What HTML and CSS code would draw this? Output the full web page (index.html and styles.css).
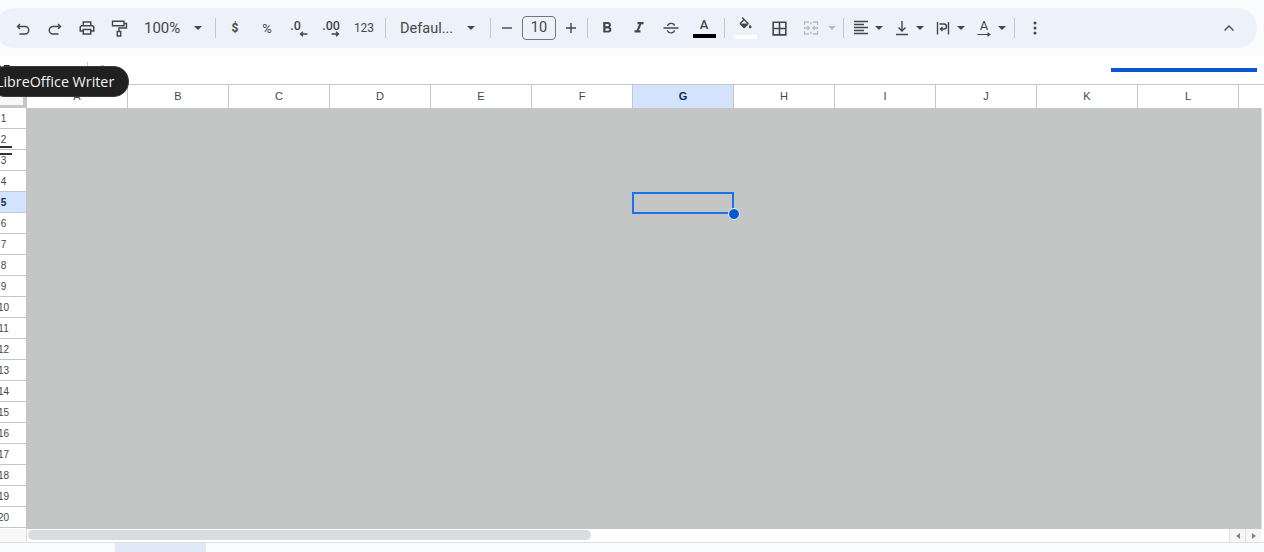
FILE: index.html
```html
<!DOCTYPE html>
<html lang="en">
<head>
  <meta charset="UTF-8" />
  <title>Sheet</title>
  <link rel="stylesheet" href="styles.css">
</head>
<body>

  <!-- Toolbar -->
  <div class="top">
    <div class="toolbar">
      <div class="btn"><svg class="icon line" viewBox="0 0 18 18"><path d="M6 5 3.500 7.500 6 10M3.500 7.500H11a3.700 3.700 0 0 1 0 7.500H5.500"/></svg></div>
      <div class="btn"><svg class="icon line" viewBox="0 0 18 18"><path d="M12 5l2.500 2.500L12 10M14.500 7.500H7A3.700 3.700 0 0 0 7 15h5.500"/></svg></div>
      <div class="btn"><svg class="icon" viewBox="0 0 24 24"><path d="M19 8h-1V3H6v5H5c-1.660 0-3 1.340-3 3v6h4v4h12v-4h4v-6c0-1.660-1.340-3-3-3zM8 5h8v3H8V5zm8 14H8v-4h8v4zm4-4h-2v-2H6v2H4v-4c0-.55.45-1 1-1h14c.55 0 1 .45 1 1v4z"/></svg></div>
      <div class="btn"><svg class="icon line" viewBox="0 0 18 18"><path d="M2.500 2.200h11.500v4.600H2.500zM14 4.500h2.500v4.500H9v3.500M7.300 12.500h3.400v4.500H7.300z"/></svg></div>
      <div class="select zoom-select"><span>100%</span><i class="caret"></i></div>
      <div class="sep"></div>
      <div class="btn glyph bold">$</div>
      <div class="btn glyph percent">%</div>
      <div class="btn stack">
        <span class="one-place">.0</span>
        <svg class="tiny-arrow" viewBox="0 0 9 6"><path d="M8.500 3H2M4 .700 1.500 3 4 5.300"/></svg>
      </div>
      <div class="btn stack">
        <span>.00</span>
        <svg class="tiny-arrow" viewBox="0 0 9 6"><path d="M.500 3H7M5 .700 7.500 3 5 5.300"/></svg>
      </div>
      <div class="btn wide-34 glyph">123</div>
      <div class="sep"></div>
      <div class="select font-select"><span>Defaul...</span><i class="caret"></i></div>
      <div class="sep"></div>
      <div class="btn step minus"><svg class="icon line" viewBox="0 0 18 18"><path d="M4 9h10"/></svg></div>
      <div class="size-input">10</div>
      <div class="btn step plus"><svg class="icon line" viewBox="0 0 18 18"><path d="M4 9h10M9 4v10"/></svg></div>
      <div class="sep"></div>
      <div class="btn"><svg class="icon" viewBox="0 0 24 24"><path d="M15.600 10.790c.97-.67 1.650-1.770 1.650-2.790 0-2.260-1.750-4-4-4H7v14h7.040c2.090 0 3.710-1.700 3.710-3.790 0-1.520-.86-2.820-2.150-3.420zM10 6.500h3c.83 0 1.500.67 1.500 1.500s-.67 1.500-1.500 1.500h-3v-3zm3.500 9H10v-3h3.500c.83 0 1.500.67 1.500 1.500s-.67 1.500-1.500 1.500z"/></svg></div>
      <div class="btn"><svg class="icon" viewBox="0 0 24 24"><path d="M10 4v3h2.210l-3.420 8H6v3h8v-3h-2.210l3.420-8H18V4z"/></svg></div>
      <div class="btn"><svg class="icon line" viewBox="0 0 18 18"><path d="M1.500 9h15M5.800 7C5.500 3.800 12 3.300 12.400 6.600M12.400 11.200C12.500 14.700 5.600 14.800 5.600 11.200"/></svg></div>
      <div class="btn swatch-btn text-color"><span class="a-mark">A</span><i class="swatch black"></i></div>
      <div class="sep"></div>
      <div class="btn swatch-btn fill-color">
        <svg class="bucket" viewBox="0 0 24 24"><path d="M16.560 8.940 7.620 0 6.210 1.410l2.380 2.380-5.150 5.150c-.59.59-.59 1.540 0 2.120l5.500 5.500c.29.29.68.44 1.060.44s.77-.15 1.060-.44l5.500-5.500c.59-.58.59-1.530 0-2.120zM5.210 10 10 5.210 14.790 10H5.210zM19 11.500s-2 2.170-2 3.500c0 1.100.9 2 2 2s2-.9 2-2c0-1.330-2-3.500-2-3.500z"/><path d="M4 10h12l-6 6z"/></svg>
        <i class="swatch white"></i>
      </div>
      <div class="btn"><svg class="icon borders" viewBox="0 0 24 24"><path d="M3 3v18h18V3H3zm8 16H5v-6h6v6zm0-8H5V5h6v6zm8 8h-6v-6h6v6zm0-8h-6V5h6v6z"/></svg></div>
      <div class="btn"><svg class="icon line off" viewBox="0 0 18 18"><path d="M7 3H2.500v3M11 3h4.500v3M7 15H2.500v-3M11 15h4.500v-3M2.500 8v2M15.500 8v2M2.500 9H7M5.300 7 7.300 9l-2 2M15.500 9H11M12.700 7l-2 2 2 2M9 3v2.500M9 12.500V15"/></svg></div>
      <i class="caret off-caret merge-caret"></i>
      <div class="sep"></div>
      <div class="group">
        <div class="btn narrow"><svg class="icon line" viewBox="0 0 18 18"><path d="M2 2.500h14M2 5.500h10M2 8.500h14M2 11.500h10M2 14.500h14"/></svg></div>
        <i class="caret"></i>
      </div>
      <div class="group">
        <div class="btn narrow"><svg class="icon line" viewBox="0 0 18 18"><path d="M9 2v10M5.500 8.500 9 12l3.500-3.500M3 15.500h12"/></svg></div>
        <i class="caret"></i>
      </div>
      <div class="group">
        <div class="btn narrow"><svg class="icon line" viewBox="0 0 18 18"><path d="M3.500 3v12.500M14.500 3v12.500M5.500 5h4.500a2.200 2.200 0 0 1 0 5H6.500M8.500 8 6.500 10l2 2"/></svg></div>
        <i class="caret"></i>
      </div>
      <div class="group last">
        <div class="btn narrow stack rotate">
          <span>A</span>
          <svg class="rotate-arrow" viewBox="0 0 14 5"><path d="M.500 2.500H12.500M10.500.700 12.800 2.500 10.500 4.300"/></svg>
        </div>
        <i class="caret"></i>
      </div>
      <div class="sep"></div>
      <div class="btn more"><svg class="icon" viewBox="0 0 18 18"><circle cx="9" cy="4" r="1.500"/><circle cx="9" cy="9" r="1.500"/><circle cx="9" cy="14" r="1.500"/></svg></div>
      <div class="btn collapse"><svg class="icon line" viewBox="0 0 18 18"><path d="M4.500 11.500 9 7l4.500 4.500"/></svg></div>
    </div>
  </div>

  <!-- Formula bar, mostly covered by the tooltip -->
  <div class="formula">
    <div class="name-box">G5</div>
    <div class="formula-sep"></div>
    <div class="fx">fx</div>
    <div class="progress"></div>
    <div class="tooltip">LibreOffice Writer</div>
  </div>

  <!-- Column letters -->
  <div class="col-heads">
    <div class="corner"></div>
    <div class="col">A</div>
    <div class="col">B</div>
    <div class="col">C</div>
    <div class="col">D</div>
    <div class="col">E</div>
    <div class="col">F</div>
    <div class="col active">G</div>
    <div class="col">H</div>
    <div class="col">I</div>
    <div class="col">J</div>
    <div class="col">K</div>
    <div class="col">L</div>
  </div>

  <div class="sheet">
    <div class="row-heads">
      <div class="row">1</div>
      <div class="row">2</div>
      <div class="row">3</div>
      <div class="row">4</div>
      <div class="row active">5</div>
      <div class="row">6</div>
      <div class="row">7</div>
      <div class="row">8</div>
      <div class="row">9</div>
      <div class="row">10</div>
      <div class="row">11</div>
      <div class="row">12</div>
      <div class="row">13</div>
      <div class="row">14</div>
      <div class="row">15</div>
      <div class="row">16</div>
      <div class="row">17</div>
      <div class="row">18</div>
      <div class="row">19</div>
      <div class="row">20</div>
      <i class="drag-bar first"></i>
      <i class="drag-bar second"></i>
    </div>
    <div class="canvas">
      <div class="selection"><i class="handle"></i></div>
    </div>
    <div class="v-scroll"></div>
  </div>

  <!-- Horizontal scroll -->
  <div class="h-scroll">
    <div class="h-corner"></div>
    <div class="h-track"><div class="h-thumb"></div></div>
    <div class="arrow-btn"><i class="tri left"></i></div>
    <div class="arrow-btn"><i class="tri right"></i></div>
  </div>

  <!-- Sheet tabs -->
  <div class="tabs"><div class="tab"></div></div>

</body>
</html>
```

FILE: styles.css
```css
* {
  box-sizing: border-box;
  margin: 0;
  padding: 0;
}

html, body {
  width: 1264px;
  height: 552px;
  overflow: hidden;
}

body {
  font-family: Roboto, "Liberation Sans", sans-serif;
  background: white;
  color: #444746;
}

.top {
  background: #f9fbfd;
  height: 56px;
  padding-top: 8px;
}

.toolbar {
  display: flex;
  align-items: center;
  width: 1262px;
  height: 40px;
  margin-left: -5px;
  padding-left: 12px;
  padding-right: 12px;
  background: #edf2fa;
  border-radius: 20px;
}

.btn {
  flex: none;
  width: 32px;
  height: 28px;
  display: flex;
  align-items: center;
  justify-content: center;
}

.icon {
  width: 18px;
  height: 18px;
  fill: #444746;
}

.icon.line {
  fill: none;
  stroke: #444746;
  stroke-width: 1.4;
}

.icon.off {
  stroke: #b7bcc2;
  stroke-width: 1.3;
}

.icon.borders {
  width: 19px;
  height: 19px;
}

.glyph {
  font-size: 12px;
}

.glyph.bold {
  font-weight: 700;
}

.glyph.percent {
  font-size: 13px;
}

.wide-34 {
  width: 34px;
}

.sep {
  flex: none;
  width: 1px;
  height: 20px;
  margin: 0 3px 0 4px;
  background: #c7c7c7;
}

.select {
  flex: none;
  display: flex;
  align-items: center;
  justify-content: space-between;
  height: 28px;
  font-size: 15px;
}

.zoom-select {
  width: 76px;
  padding-left: 9px;
  padding-right: 9px;
}

.font-select {
  width: 97px;
  padding-left: 11px;
  padding-right: 11px;
  font-size: 14.5px;
}

.caret {
  flex: none;
  display: block;
  width: 0;
  height: 0;
  border-left: 4px solid transparent;
  border-right: 4px solid transparent;
  border-top: 4px solid #444746;
}

.off-caret {
  border-top-color: #b7bcc2;
}

.merge-caret {
  margin-left: 1px;
  margin-right: 3px;
}

.stack {
  flex-direction: column;
  font-size: 12.5px;
  font-weight: 500;
  line-height: 11px;
}

.one-place {
  margin-right: 7px;
}

.tiny-arrow {
  width: 9px;
  height: 6px;
  margin-left: 9px;
  fill: none;
  stroke: #444746;
  stroke-width: 1.4;
}

.step {
  width: 26px;
}

.plus {
  width: 25px;
}

.size-input {
  flex: none;
  width: 34px;
  height: 24px;
  margin: 0 2px;
  border: 1px solid #747775;
  border-radius: 4px;
  font-size: 14.5px;
  line-height: 22px;
  text-align: center;
}

.swatch-btn {
  flex-direction: column;
  height: 32px;
}

.text-color {
  width: 33px;
  padding-left: 1px;
}

.fill-color {
  width: 35px;
  padding-right: 1px;
}

.a-mark {
  font-size: 13px;
  line-height: 14px;
  font-weight: 500;
}

.swatch {
  display: block;
  width: 23px;
  height: 4px;
  margin-top: 2px;
}

.swatch.black {
  background: black;
}

.swatch.white {
  background: white;
}

.bucket {
  width: 17px;
  height: 16px;
  fill: #444746;
}

.group {
  flex: none;
  display: flex;
  align-items: center;
  width: 41px;
}

.group.last {
  width: 40px;
}

.narrow {
  width: 28px;
}

.rotate {
  font-size: 13px;
  line-height: 12px;
  font-weight: 400;
}

.rotate-arrow {
  width: 14px;
  height: 5px;
  fill: none;
  stroke: #444746;
  stroke-width: 1.2;
}

.more {
  margin-left: 1px;
}

.collapse {
  margin-left: auto;
}

.formula {
  position: relative;
  display: flex;
  align-items: flex-start;
  height: 28px;
}

.name-box {
  width: 87px;
  margin-top: 7px;
  text-indent: -7px;
  font-size: 14px;
  font-weight: 700;
  color: #222;
}

.formula-sep {
  width: 1px;
  height: 20px;
  margin-top: 6px;
  background: #c7c7c7;
}

.fx {
  margin-top: 7px;
  margin-left: 11px;
  font-size: 13px;
  color: #9aa0a6;
}

.progress {
  width: 146px;
  height: 4px;
  margin-top: 12px;
  margin-left: auto;
  margin-right: 7px;
  background: #0b57d0;
}

.tooltip {
  position: absolute;
  left: -10px;
  top: 10px;
  width: 139px;
  height: 31px;
  padding-left: 5px;
  background: #202020;
  border: 1px solid #3a3a3a;
  border-radius: 15px;
  font-family: "Open Sans", sans-serif;
  font-size: 14.3px;
  line-height: 29px;
  white-space: nowrap;
  color: #f2f2f2;
}

.col-heads {
  display: flex;
  height: 24px;
  border-top: 1px solid #c4c7c5;
  font-family: "Liberation Sans", sans-serif;
}

.corner {
  flex: none;
  width: 27px;
  background: #f8f8f8;
  border-right: 4px solid #c4c7c5;
  border-bottom: 3px solid #c4c7c5;
}

.col {
  flex: none;
  width: 101px;
  border-right: 1px solid #c4c7c5;
  font-size: 11px;
  line-height: 23px;
  text-align: center;
  color: #444746;
}

.col.active {
  background: #d3e3fd;
  font-weight: 700;
  color: #0b2a5c;
}

.sheet {
  display: flex;
  height: 421px;
}

.row-heads {
  position: relative;
  flex: none;
  width: 26px;
  font-family: "Liberation Sans", sans-serif;
}

.row {
  display: flex;
  justify-content: center;
  height: 21px;
  padding-right: 19px;
  border-bottom: 1px solid #c4c7c5;
  font-size: 10px;
  line-height: 22px;
  color: #444746;
}

.row.active {
  background: #d3e3fd;
  font-weight: 700;
  color: #0b2a5c;
}

.drag-bar {
  position: absolute;
  left: 0;
  width: 12px;
  height: 2px;
  background: #333;
}

.drag-bar.first {
  top: 38px;
}

.drag-bar.second {
  top: 45px;
}

.canvas {
  position: relative;
  flex: none;
  width: 1235px;
  height: 421px;
  background: #c4c6c5;
}

.selection {
  position: absolute;
  left: 606px;
  top: 84px;
  width: 102px;
  height: 22px;
  border: 2px solid #1a73e8;
}

.handle {
  position: absolute;
  right: -8px;
  bottom: -8px;
  width: 12px;
  height: 12px;
  background: #0b57d0;
  border: 1px solid #f2f5fc;
  border-radius: 50%;
}

.v-scroll {
  flex: none;
  width: 3px;
  background: white;
  border-left: 1px solid #e0e0e0;
}

.h-scroll {
  display: flex;
  height: 14px;
  border-bottom: 1px solid #e0e0e0;
}

.h-corner {
  flex: none;
  width: 27px;
  background: #f8f8f8;
  border-right: 1px solid #dcdcdc;
}

.h-track {
  flex: none;
  width: 1202px;
  padding: 1px 0 0 1px;
}

.h-thumb {
  width: 563px;
  height: 10px;
  background: #dadce0;
  border-radius: 5px;
}

.arrow-btn {
  flex: none;
  display: flex;
  align-items: center;
  justify-content: center;
  width: 16px;
  background: #f5f5f5;
  border-left: 1px solid #e0e0e0;
}

.tri {
  display: block;
  width: 0;
  height: 0;
  border-top: 3px solid transparent;
  border-bottom: 3px solid transparent;
}

.tri.left {
  border-right: 4px solid #80868b;
}

.tri.right {
  border-left: 4px solid #80868b;
}

.tabs {
  height: 9px;
  padding-left: 115px;
  background: #f9fbfd;
}

.tab {
  width: 91px;
  height: 9px;
  background: #e1e9f7;
}
```
